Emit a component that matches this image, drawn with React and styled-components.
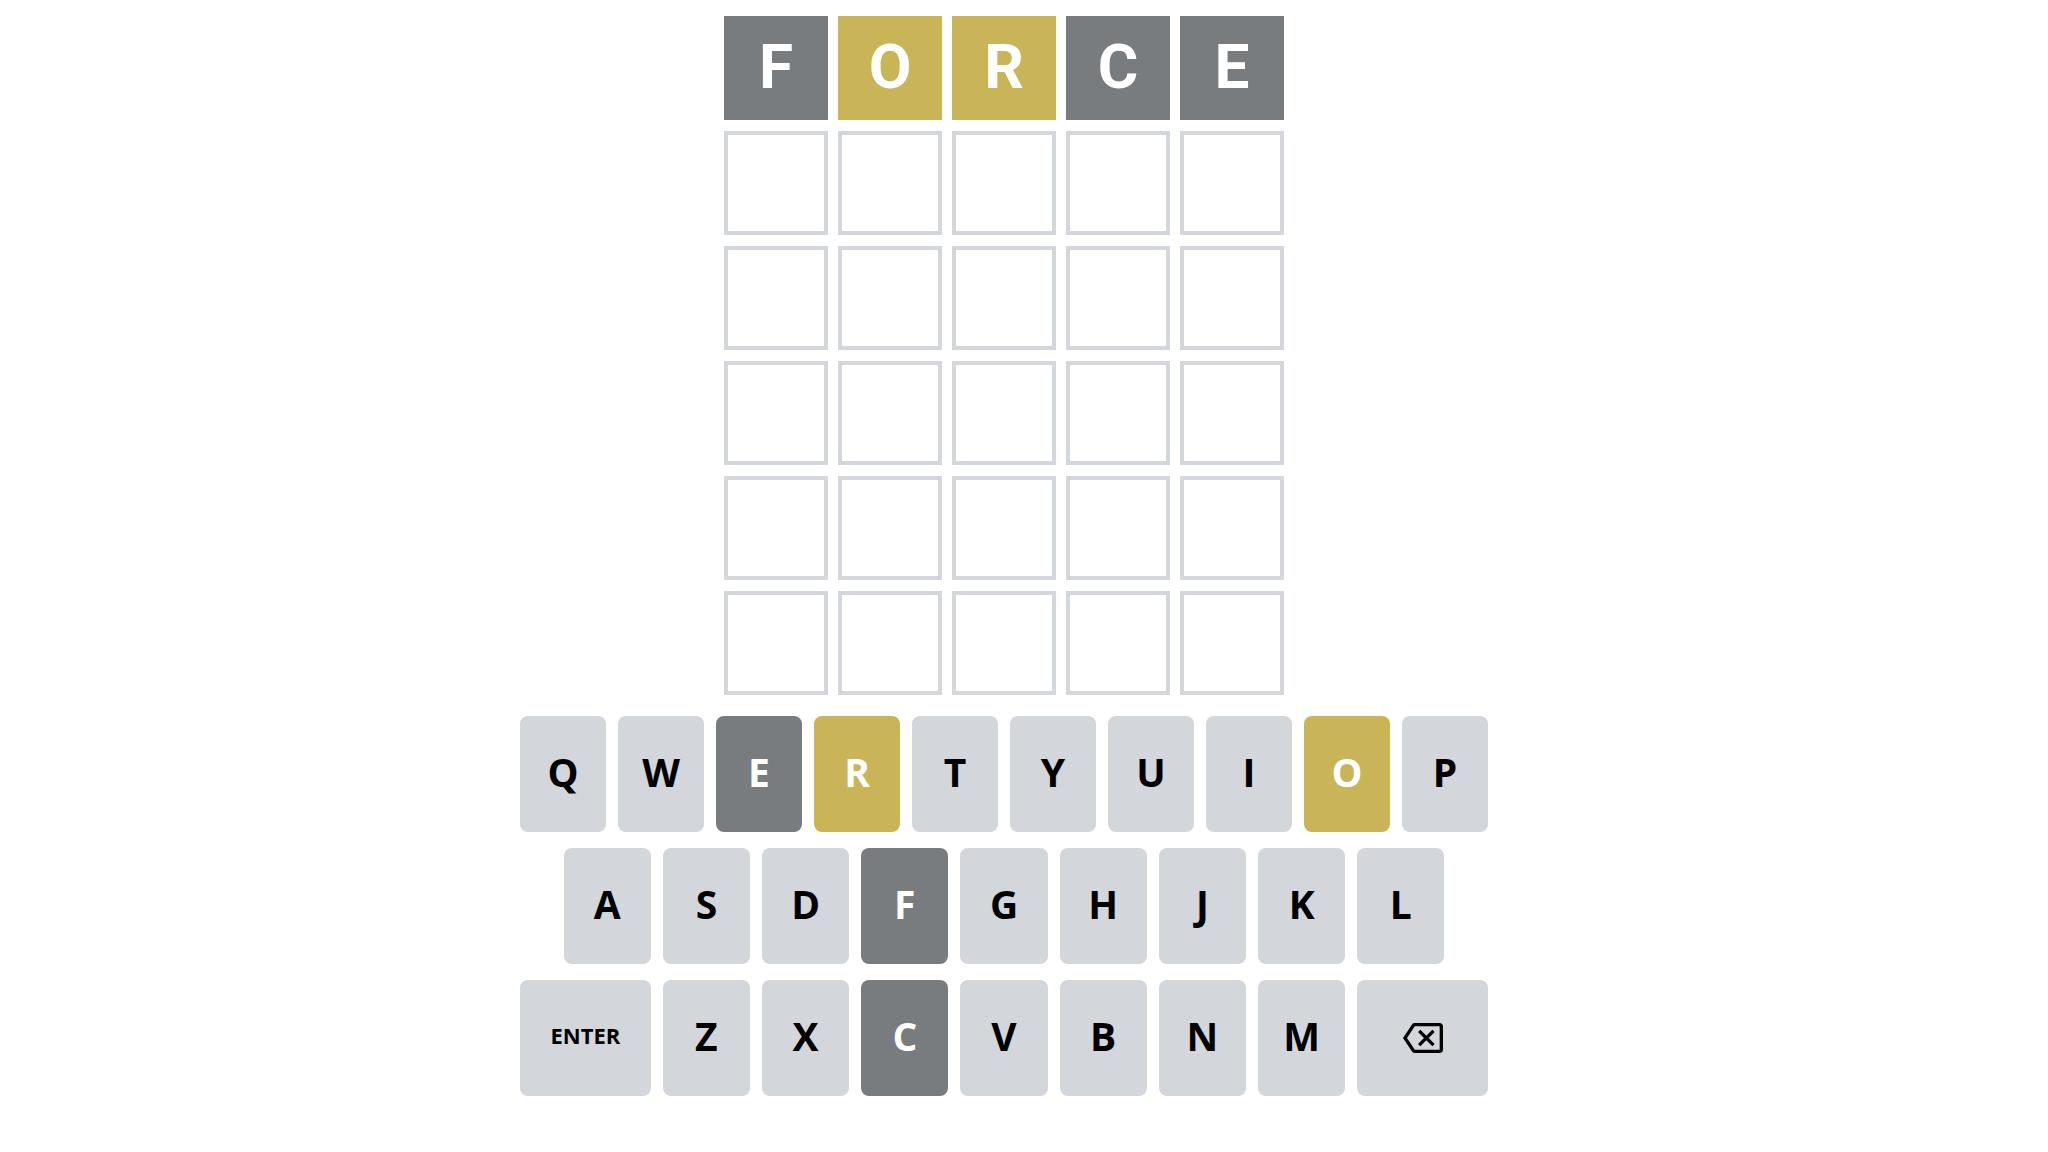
import React from "react";
import styled, { createGlobalStyle } from "styled-components";

const GlobalStyle = createGlobalStyle`
  body {
    margin: 0;
    padding: 0;
    background: #ffffff;
  }
`;

const COLORS = {
  absent: "#787c7e",
  present: "#c9b458",
  correct: "#6aaa64",
  key: "#d3d6da",
  border: "#d3d6da",
};

const Page = styled.div`
  width: 2048px;
  height: 1152px;
  box-sizing: border-box;
  padding: 16px 40px 0 0;
  display: flex;
  flex-direction: column;
  align-items: center;
`;

const Board = styled.div`
  display: grid;
  grid-template-columns: repeat(5, 104px);
  grid-auto-rows: 104px;
  column-gap: 10px;
  row-gap: 11px;
`;

const Tile = styled.div`
  box-sizing: border-box;
  display: flex;
  align-items: center;
  justify-content: center;
  background: ${(p) => (p.$state ? COLORS[p.$state] : "#ffffff")};
  border: ${(p) => (p.$state ? "none" : `4px solid ${COLORS.border}`)};
  color: #ffffff;
  font-family: Roboto, "Liberation Sans", sans-serif;
  font-weight: 700;
  font-size: 62px;
  line-height: 1;
  padding-bottom: 3px;
  text-transform: uppercase;
`;

const Keyboard = styled.div`
  width: 968px;
  margin-top: 21px;
  display: flex;
  flex-direction: column;
  gap: 16px;
`;

const KeyRow = styled.div`
  display: flex;
  gap: 12px;
  padding: 0 ${(p) => (p.$inset ? "43.6px" : "0")};
`;

const Key = styled.button`
  flex: ${(p) => (p.$wide ? 1.5 : 1)};
  height: 116px;
  border: 0;
  border-radius: 8px;
  padding: 0 0 ${(p) => (p.$icon ? "0" : "6px")};
  margin: 0;
  display: flex;
  align-items: center;
  justify-content: center;
  background: ${(p) => (p.$state ? COLORS[p.$state] : COLORS.key)};
  color: ${(p) => (p.$state ? "#ffffff" : "#000000")};
  font-family: "Open Sans", "Noto Sans", sans-serif;
  font-weight: 700;
  font-size: ${(p) => (p.$wide ? "22px" : "39px")};
  line-height: 1;
  cursor: pointer;
`;

const BackspaceIcon = () => (
  <svg width="40" height="40" viewBox="0 0 24 24" fill="#000000">
    <path d="M22 3H7c-.69 0-1.23.35-1.59.88L0 12l5.41 8.11c.36.53.9.89 1.59.89h15c1.1 0 2-.9 2-2V5c0-1.1-.9-2-2-2zm0 16H7.07L2.4 12l4.66-7H22v14zm-11.59-2L14 13.41 17.59 17 19 15.59 15.41 12 19 8.41 17.59 7 14 10.59 10.41 7 9 8.41 12.59 12 9 15.59z" />
  </svg>
);

const guesses = [
  [
    ["F", "absent"],
    ["O", "present"],
    ["R", "present"],
    ["C", "absent"],
    ["E", "absent"],
  ],
];

const keyStates = {
  E: "absent",
  F: "absent",
  C: "absent",
  R: "present",
  O: "present",
};

const rows = ["QWERTYUIOP", "ASDFGHJKL", "ZXCVBNM"];

export default function App() {
  const board = [];
  for (let r = 0; r < 6; r++) {
    for (let c = 0; c < 5; c++) {
      const cell = guesses[r] ? guesses[r][c] : null;
      board.push(
        <Tile key={`${r}-${c}`} $state={cell ? cell[1] : null}>
          {cell ? cell[0] : ""}
        </Tile>
      );
    }
  }

  const letterKeys = (letters) =>
    letters.split("").map((l) => (
      <Key key={l} $state={keyStates[l]}>
        {l}
      </Key>
    ));

  return (
    <Page>
      <GlobalStyle />
      <Board>{board}</Board>
      <Keyboard>
        <KeyRow>{letterKeys(rows[0])}</KeyRow>
        <KeyRow $inset>{letterKeys(rows[1])}</KeyRow>
        <KeyRow>
          <Key $wide>ENTER</Key>
          {letterKeys(rows[2])}
          <Key $wide $icon aria-label="backspace">
            <BackspaceIcon />
          </Key>
        </KeyRow>
      </Keyboard>
    </Page>
  );
}
